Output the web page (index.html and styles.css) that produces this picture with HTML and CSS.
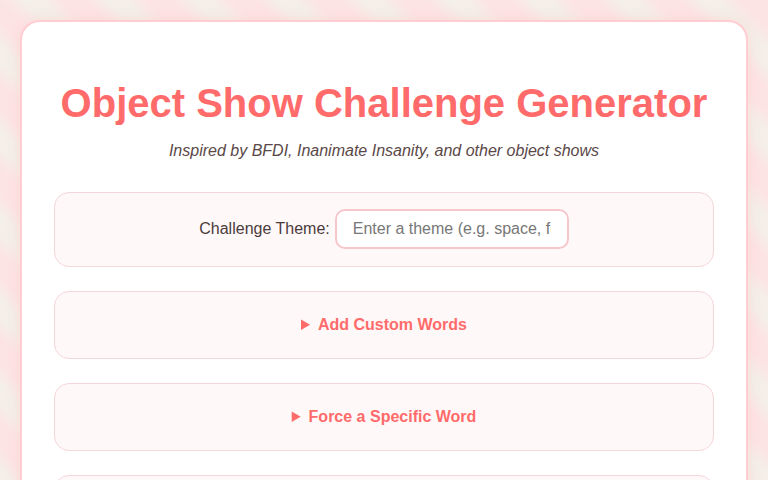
FILE: index.html
```html
<!DOCTYPE html>
<html>
<head>
<meta charset="utf-8">
<link rel="stylesheet" href="styles.css">
</head>
<body>
<div class="card">
  <h1 class="title">Object Show Challenge Generator</h1>
  <p class="subtitle">Inspired by BFDI, Inanimate Insanity, and other object shows</p>
  <div class="section theme-row">
    <label class="theme-label" for="theme">Challenge Theme:</label>
    <input class="theme-input" id="theme" type="text" placeholder="Enter a theme (e.g. space, food, sports)">
  </div>
  <details class="section">
    <summary class="summary">Add Custom Words</summary>
  </details>
  <details class="section">
    <summary class="summary">Force a Specific Word</summary>
  </details>
  <div class="section">&nbsp;</div>
</div>
</body>
</html>
```
FILE: styles.css
```css
html, body {
  margin: 0;
  padding: 0;
}
body {
  font-family: "Liberation Sans", Arial, sans-serif;
  background: repeating-linear-gradient(45deg, #fde4e4 0 8px, #f4efe8 24px 36px, #fde4e4 52px 60px);
  padding: 20px;
  min-height: 480px;
  box-sizing: border-box;
  overflow: hidden;
}
.card {
  background: #fff;
  border: 2px solid #ffcdd2;
  border-radius: 20px;
  padding: 32px 32px;
  box-shadow: 0 0 15px rgba(255, 182, 193, 0.35);
}
.title {
  color: #ff6b6b;
  font-size: 40px;
  font-weight: bold;
  text-align: center;
  margin: 27px 0 16px;
}
.subtitle {
  text-align: center;
  font-style: italic;
  color: #5a4848;
  font-size: 16px;
  margin: 0 0 32px;
}
.section {
  background: #fff8f8;
  border: 1px solid #f5d6da;
  border-radius: 15px;
  padding: 16px;
  margin-bottom: 24px;
}
.theme-row {
  display: flex;
  justify-content: center;
  align-items: center;
  gap: 5px;
  padding: 16px 16px 17px;
}
.theme-label {
  color: #4a3c3c;
  font-size: 16px;
}
.theme-input {
  width: 234px;
  height: 40px;
  box-sizing: border-box;
  border: 2px solid #f5c6cb;
  border-radius: 10px;
  padding: 8px 16px;
  font-family: "Liberation Sans", Arial, sans-serif;
  font-size: 16px;
  color: #333;
  background: #fff;
}
.theme-input::placeholder {
  color: #777;
}
details.section {
  padding: 20px 16px;
  text-align: center;
}
.summary {
  color: #ff6b6b;
  font-weight: bold;
  font-size: 16px;
  cursor: pointer;
  padding: 4px 0;
}
```
